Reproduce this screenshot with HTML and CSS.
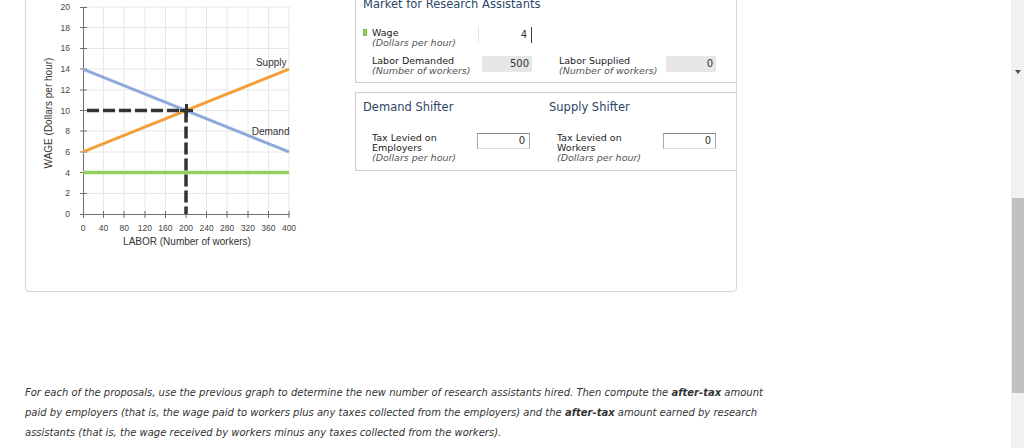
FILE: index.html
```html
<!DOCTYPE html>
<html lang="en">
<head>
<meta charset="utf-8">
<title>Market for Research Assistants</title>
<link rel="stylesheet" href="styles.css">
</head>
<body>
<div class="viewport">
  <div class="card">
    <div class="chart">
      <svg class="graph" width="329" height="309" viewBox="26 -19 329 309">
        <g class="grid">
          <line x1="83" y1="193.5" x2="289" y2="193.5"/>
          <line x1="83" y1="172.5" x2="289" y2="172.5"/>
          <line x1="83" y1="152" x2="289" y2="152"/>
          <line x1="83" y1="131" x2="289" y2="131"/>
          <line x1="83" y1="110.5" x2="289" y2="110.5"/>
          <line x1="83" y1="90" x2="289" y2="90"/>
          <line x1="83" y1="69" x2="289" y2="69"/>
          <line x1="83" y1="48.5" x2="289" y2="48.5"/>
          <line x1="83" y1="27.5" x2="289" y2="27.5"/>
          <line x1="83" y1="7" x2="289" y2="7"/>
          <line x1="103.5" y1="7" x2="103.5" y2="214"/>
          <line x1="124" y1="7" x2="124" y2="214"/>
          <line x1="145" y1="7" x2="145" y2="214"/>
          <line x1="165.5" y1="7" x2="165.5" y2="214"/>
          <line x1="186" y1="7" x2="186" y2="214"/>
          <line x1="206.5" y1="7" x2="206.5" y2="214"/>
          <line x1="227" y1="7" x2="227" y2="214"/>
          <line x1="248" y1="7" x2="248" y2="214"/>
          <line x1="268.5" y1="7" x2="268.5" y2="214"/>
          <line x1="289" y1="7" x2="289" y2="214"/>
        </g>
        <g class="axis">
          <line x1="83.5" y1="7" x2="83.5" y2="214.5"/>
          <line x1="83" y1="214.5" x2="289.5" y2="214.5"/>
          <path d="M80 7.5H87M80 27.5H87M80 48.5H87M80 69H87M80 90H87M80 110.5H87M80 131H87M80 152H87M80 172.5H87M80 193.5H87M80 214.5H87"/>
          <path d="M83.5 211V218M103.5 211V218M124 211V218M145 211V218M165.5 211V218M186 211V218M206.5 211V218M227 211V218M248 211V218M268.5 211V218M289 211V218"/>
        </g>
        <g class="tick-y">
          <text x="70" y="10">20</text>
          <text x="70" y="30.7">18</text>
          <text x="70" y="51.4">16</text>
          <text x="70" y="72.1">14</text>
          <text x="70" y="92.8">12</text>
          <text x="70" y="113.5">10</text>
          <text x="70" y="134.2">8</text>
          <text x="70" y="154.9">6</text>
          <text x="70" y="175.6">4</text>
          <text x="70" y="196.3">2</text>
          <text x="70" y="217">0</text>
        </g>
        <g class="tick-x">
          <text x="83" y="231">0</text>
          <text x="103.6" y="231">40</text>
          <text x="124.2" y="231">80</text>
          <text x="144.8" y="231">120</text>
          <text x="165.4" y="231">160</text>
          <text x="186" y="231">200</text>
          <text x="206.6" y="231">240</text>
          <text x="227.2" y="231">280</text>
          <text x="247.8" y="231">320</text>
          <text x="268.4" y="231">360</text>
          <text x="289" y="231">400</text>
        </g>
        <text class="axis-title" x="187" y="244.5">LABOR (Number of workers)</text>
        <text class="axis-title" transform="translate(51.5 113) rotate(-90)">WAGE (Dollars per hour)</text>
        <path class="demand" d="M83 69.1L289 151.9"/>
        <path class="supply" d="M83 151.9L289 69.1"/>
        <path class="wage-line" d="M83 172.6H289"/>
        <path class="dash" d="M87 110.5H186"/>
        <path class="dash" d="M186 110.5V214"/>
        <path class="cross" d="M180 110.5H193M186.5 104V117"/>
        <text class="curve-label" x="286.5" y="66">Supply</text>
        <text class="curve-label" x="289.5" y="135">Demand</text>
      </svg>
    </div>
    <div class="controls">
      <section class="panel market">
        <h2 class="panel-title">Market for Research Assistants</h2>
        <div class="wage-row">
          <span class="marker"></span>
          <div class="label wage-label">
            <div class="name">Wage</div>
            <div class="unit">(Dollars per hour)</div>
          </div>
          <div class="wage-input">4</div>
        </div>
        <div class="labor-row">
          <div class="label labor-a">
            <div class="name">Labor Demanded</div>
            <div class="unit">(Number of workers)</div>
          </div>
          <div class="output">500</div>
          <div class="label labor-b">
            <div class="name">Labor Supplied</div>
            <div class="unit">(Number of workers)</div>
          </div>
          <div class="output">0</div>
        </div>
      </section>
      <section class="panel shifters">
        <div class="shifter-head">
          <h3 class="shifter-title demand-title">Demand Shifter</h3>
          <h3 class="shifter-title">Supply Shifter</h3>
        </div>
        <div class="tax-row">
          <div class="label tax-a">
            <div class="name">Tax Levied on</div>
            <div class="name">Employers</div>
            <div class="unit">(Dollars per hour)</div>
          </div>
          <div class="tax-input">0</div>
          <div class="label tax-b">
            <div class="name">Tax Levied on</div>
            <div class="name">Workers</div>
            <div class="unit">(Dollars per hour)</div>
          </div>
          <div class="tax-input">0</div>
        </div>
      </section>
    </div>
  </div>
  <p class="instructions">For each of the proposals, use the previous graph to determine the new number of research assistants hired. Then compute the <b>after-tax</b> amount paid by employers (that is, the wage paid to workers plus any taxes collected from the employers) and the <b>after-tax</b> amount earned by research assistants (that is, the wage received by workers minus any taxes collected from the workers).</p>
</div>
<div class="scrollbar">
  <span class="scroll-arrow"></span>
  <span class="scroll-thumb"></span>
</div>
</body>
</html>
```

FILE: styles.css
```css
html, body {
  margin: 0;
  padding: 0;
  background: #ffffff;
}

body {
  width: 1024px;
  height: 448px;
  overflow: hidden;
  font-family: "DejaVu Sans", Verdana, sans-serif;
  color: #333333;
}

.viewport {
  width: 1011px;
  height: 448px;
  overflow: hidden;
}

.card {
  box-sizing: border-box;
  display: flex;
  width: 712px;
  height: 312px;
  margin: -20px 0 0 25px;
  border: 1px solid #d6d6d6;
  border-radius: 4px;
  background: #ffffff;
}

.chart {
  width: 329px;
  flex: none;
}

.graph {
  display: block;
}

.grid line {
  stroke: #e7e7e7;
  stroke-width: 1;
}

.axis line,
.axis path {
  stroke: #6f6f6f;
  stroke-width: 1;
  fill: none;
}

.tick-y text,
.tick-x text {
  font-family: "Liberation Sans", Arial, sans-serif;
  font-size: 8.5px;
  fill: #444444;
}

.tick-y text {
  text-anchor: end;
}

.tick-x text {
  text-anchor: middle;
}

.axis-title {
  font-family: "Liberation Sans", Arial, sans-serif;
  font-size: 10px;
  fill: #333333;
  text-anchor: middle;
}

.curve-label {
  font-family: "Liberation Sans", Arial, sans-serif;
  font-size: 10px;
  fill: #333333;
  text-anchor: end;
}

.demand {
  stroke: #8eaad8;
  stroke-width: 3;
  fill: none;
}

.supply {
  stroke: #f2a03a;
  stroke-width: 3;
  fill: none;
}

.wage-line {
  stroke: #93d05e;
  stroke-width: 3.5;
  fill: none;
}

.dash {
  stroke: #333333;
  stroke-width: 3.5;
  stroke-dasharray: 12 4;
  fill: none;
}

.cross {
  stroke: #333333;
  stroke-width: 3;
  fill: none;
}

.controls {
  width: 381px;
  flex: none;
}

.panel {
  border: 1px solid #cccccc;
  border-right: none;
}

.market {
  padding: 15px 0 6px 7px;
}

.panel-title {
  margin: 0;
  font-size: 11.5px;
  line-height: 14px;
  font-weight: normal;
  color: #2d4667;
  white-space: nowrap;
}

.label {
  flex: none;
  font-size: 9.5px;
  line-height: 10px;
  white-space: nowrap;
}

.label .name {
  color: #222222;
}

.label .unit {
  font-style: italic;
  color: #555555;
}

.wage-row {
  display: flex;
  align-items: flex-start;
  margin-top: 16px;
}

.marker {
  flex: none;
  box-sizing: border-box;
  width: 4px;
  height: 7px;
  margin: 2px 5px 0 0;
  background: #96d164;
  border: 1px solid #7fb853;
}

.wage-label {
  width: 106px;
  margin-top: 1px;
}

.wage-input {
  box-sizing: border-box;
  width: 54px;
  height: 16px;
  padding-right: 4px;
  border-left: 1px solid #e4e4e4;
  border-right: 1px solid #3a3a3a;
  font-size: 10px;
  line-height: 16px;
  text-align: right;
  color: #333333;
}

.labor-row {
  display: flex;
  align-items: flex-start;
  margin-top: 8px;
  padding-left: 9px;
}

.labor-a {
  width: 110px;
}

.labor-b {
  width: 107px;
  margin-left: 27px;
}

.output {
  box-sizing: border-box;
  width: 50px;
  height: 16px;
  padding-right: 3px;
  background: #e6e6e6;
  font-size: 10px;
  line-height: 16px;
  text-align: right;
  color: #333333;
}

.shifters {
  margin-top: 9px;
  padding: 7px 0 7px 7px;
}

.shifter-head {
  display: flex;
}

.shifter-title {
  margin: 0;
  font-size: 11.5px;
  line-height: 14px;
  font-weight: normal;
  color: #2d4667;
  white-space: nowrap;
}

.demand-title {
  width: 186px;
}

.tax-row {
  display: flex;
  align-items: flex-start;
  margin-top: 19px;
  padding-left: 9px;
}

.tax-a {
  width: 105px;
}

.tax-b {
  width: 106px;
  margin-left: 27px;
}

.tax-input {
  box-sizing: border-box;
  width: 53px;
  height: 16px;
  padding-right: 4px;
  border: 1px solid #a8a8a8;
  border-top-color: #8a8a8a;
  border-bottom-color: #dcdcdc;
  font-size: 10px;
  line-height: 14px;
  text-align: right;
  color: #333333;
}

.instructions {
  width: 745px;
  margin: 91px 0 0 25px;
  font-size: 10px;
  line-height: 20px;
  font-style: italic;
  color: #333333;
}

.instructions b {
  font-weight: bold;
}

.scrollbar {
  position: fixed;
  top: 0;
  right: 0;
  width: 13px;
  height: 448px;
  background: #f1f1f1;
}

.scroll-arrow {
  position: absolute;
  top: 70px;
  left: 4px;
  width: 0;
  height: 0;
  border-top: 4px solid #505050;
  border-left: 3px solid transparent;
  border-right: 3px solid transparent;
}

.scroll-thumb {
  position: absolute;
  top: 198px;
  left: 1px;
  right: 0;
  height: 195px;
  background: #c1c1c1;
}
```
